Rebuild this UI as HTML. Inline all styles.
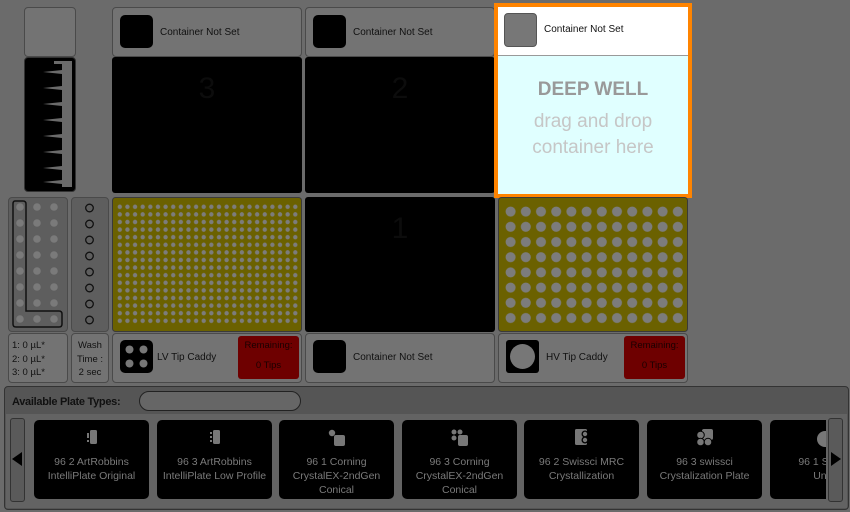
<!DOCTYPE html>
<html><head><meta charset="utf-8"><style>
*{box-sizing:border-box;margin:0;padding:0}
body{width:850px;height:512px;background:#6b6b6b;position:relative;overflow:hidden;font-family:"Liberation Sans",sans-serif}
.a{position:absolute}
.hdr{background:#737373;border:1px solid #4a4a4a;border-radius:4px}
.ico{position:absolute;width:33px;height:33px;background:#000;border-radius:5px}
.lbl{position:absolute;font-size:10px;color:#111}
.card{position:absolute;top:420px;width:115px;height:79px;background:#000;border-radius:5px;color:#7a7a7a;font-size:10.5px;text-align:center;line-height:14px;overflow:hidden}
.card div{position:absolute;top:35px;left:0;right:0}
.rem{position:absolute;background:#6e0000;border-radius:3px;color:#1a0000;font-size:9.5px;text-align:center;line-height:20px;width:61px;height:43px}
.num{position:absolute;text-align:center;font-size:30px;color:#0c0c0c}
</style></head><body>
<!-- top-left -->
<div class="a hdr" style="left:24px;top:7px;width:52px;height:50px"></div>
<div class="a" style="left:24px;top:57px;width:52px;height:135px;background:#000;border-radius:4px;border:1px solid #333"></div>
<svg class="a" style="left:24px;top:57px" width="52" height="135">
<rect x="38" y="4" width="10" height="126" fill="#6a6a6a"/>
<g fill="#6a6a6a">
<polygon points="19,15 38,13 38,17"/><polygon points="19,31 38,29 38,33"/><polygon points="19,47 38,45 38,49"/><polygon points="19,63 38,61 38,65"/><polygon points="19,79 38,77 38,81"/><polygon points="19,95 38,93 38,97"/><polygon points="19,111 38,109 38,113"/><polygon points="19,125 38,123 38,127"/>
<rect x="30" y="4" width="8" height="3"/>
</g></svg>
<!-- pos 3 -->
<div class="a hdr" style="left:112px;top:7px;width:190px;height:50px"></div>
<div class="ico" style="left:120px;top:15px"></div>
<div class="lbl" style="left:160px;top:27px">Container Not Set</div>
<div class="a" style="left:112px;top:57px;width:190px;height:136px;background:#000;border-radius:3px"></div>
<div class="num" style="left:112px;top:72px;width:190px">3</div>
<!-- pos 2 -->
<div class="a hdr" style="left:305px;top:7px;width:190px;height:50px"></div>
<div class="ico" style="left:313px;top:15px"></div>
<div class="lbl" style="left:353px;top:27px">Container Not Set</div>
<div class="a" style="left:305px;top:57px;width:190px;height:136px;background:#000;border-radius:3px"></div>
<div class="num" style="left:305px;top:72px;width:190px">2</div>
<!-- highlight -->
<div class="a" style="left:494px;top:3px;width:198px;height:195px;border:4px solid #ff8400;background:#e0ffff"></div>
<div class="a" style="left:498px;top:7px;width:190px;height:49px;background:#fff;border-bottom:1px solid #999"></div>
<div class="a" style="left:504px;top:13px;width:33px;height:34px;background:#777;border:1px solid #555;border-radius:4px"></div>
<div class="a" style="left:544px;top:24px;font-size:10px;color:#111">Container Not Set</div>
<div class="a" style="left:498px;top:79px;width:190px;text-align:center;font-size:19px;font-weight:bold;color:#999">DEEP WELL</div>
<div class="a" style="left:498px;top:109px;width:190px;text-align:center;font-size:19px;color:#c6c6c6;line-height:26px">drag and drop<br>container here</div>
<!-- row 2 -->
<div class="a" style="left:8px;top:197px;width:60px;height:135px;background:#5e5e5e;border:1px solid #4a4a4a;border-radius:4px"></div>
<svg class="a" style="left:8px;top:197px" width="60" height="135">
<g fill="#7a7a7a">
<circle cx="12" cy="10" r="3.8"/><circle cx="29" cy="10" r="3.8"/><circle cx="46" cy="10" r="3.8"/>
<circle cx="12" cy="26" r="3.8"/><circle cx="29" cy="26" r="3.8"/><circle cx="46" cy="26" r="3.8"/>
<circle cx="12" cy="42" r="3.8"/><circle cx="29" cy="42" r="3.8"/><circle cx="46" cy="42" r="3.8"/>
<circle cx="12" cy="58" r="3.8"/><circle cx="29" cy="58" r="3.8"/><circle cx="46" cy="58" r="3.8"/>
<circle cx="12" cy="74" r="3.8"/><circle cx="29" cy="74" r="3.8"/><circle cx="46" cy="74" r="3.8"/>
<circle cx="12" cy="90" r="3.8"/><circle cx="29" cy="90" r="3.8"/><circle cx="46" cy="90" r="3.8"/>
<circle cx="12" cy="106" r="3.8"/><circle cx="29" cy="106" r="3.8"/><circle cx="46" cy="106" r="3.8"/>
<circle cx="12" cy="122" r="3.8"/><circle cx="29" cy="122" r="3.8"/><circle cx="46" cy="122" r="3.8"/>
</g>
<path d="M7,4 H15 Q18,4 18,7 V114 H51 Q54,114 54,117 V127 Q54,130 51,130 H8 Q5,130 5,127 V7 Q5,4 7,4Z" fill="none" stroke="#111" stroke-width="1.5"/>
</svg>
<div class="a" style="left:71px;top:197px;width:38px;height:135px;background:#5e5e5e;border:1px solid #4a4a4a;border-radius:4px"></div>
<svg class="a" style="left:71px;top:197px" width="38" height="135"><g fill="none" stroke="#111" stroke-width="1.3">
<circle cx="18.5" cy="11" r="3.8"/><circle cx="18.5" cy="27" r="3.8"/><circle cx="18.5" cy="43" r="3.8"/><circle cx="18.5" cy="59" r="3.8"/><circle cx="18.5" cy="75" r="3.8"/><circle cx="18.5" cy="91" r="3.8"/><circle cx="18.5" cy="107" r="3.8"/><circle cx="18.5" cy="123" r="3.8"/></g></svg>
<svg class="a" style="left:112px;top:197px" width="190" height="135">
<defs><pattern id="lv" x="4" y="6" width="7.63" height="7.6" patternUnits="userSpaceOnUse"><circle cx="3.8" cy="3.8" r="2.2" fill="#7c7c7c"/></pattern>
<pattern id="hv" x="5" y="7" width="15.2" height="15.2" patternUnits="userSpaceOnUse"><circle cx="7.6" cy="7.6" r="5" fill="#7c7c7c"/></pattern></defs>
<rect x="0.5" y="0.5" width="189" height="134" rx="3" fill="#6b6100" stroke="#3a3a3a"/>
<rect x="4" y="6" width="183" height="122" fill="url(#lv)"/>
</svg>
<div class="a" style="left:305px;top:197px;width:190px;height:135px;background:#000;border-radius:3px"></div>
<div class="num" style="left:305px;top:212px;width:190px">1</div>
<svg class="a" style="left:498px;top:197px" width="190" height="135">
<rect x="0.5" y="0.5" width="189" height="134" rx="3" fill="#6b6100" stroke="#3a3a3a"/>
<rect x="5" y="7" width="183" height="122" fill="url(#hv)"/>
</svg>
<!-- bottom labels -->
<div class="a hdr" style="left:8px;top:333px;width:60px;height:50px;font-size:9.5px;color:#111;padding:5px 0 0 3px;line-height:13.5px">1: 0 µL*<br>2: 0 µL*<br>3: 0 µL*</div>
<div class="a hdr" style="left:71px;top:333px;width:38px;height:50px;font-size:9.5px;color:#111;text-align:center;padding-top:5px;line-height:13.5px">Wash<br>Time :<br>2 sec</div>
<div class="a hdr" style="left:112px;top:333px;width:190px;height:50px"></div>
<svg class="a" style="left:120px;top:340px" width="33" height="33"><rect width="33" height="33" rx="5" fill="#000"/><g fill="#777"><circle cx="9.5" cy="9.5" r="4"/><circle cx="23.5" cy="9.5" r="4"/><circle cx="9.5" cy="23.5" r="4"/><circle cx="23.5" cy="23.5" r="4"/></g></svg>
<div class="lbl" style="left:157px;top:352px">LV Tip Caddy</div>
<div class="rem" style="left:238px;top:336px">Remaining:<br>0 Tips</div>
<div class="a hdr" style="left:305px;top:333px;width:190px;height:50px"></div>
<div class="ico" style="left:313px;top:340px"></div>
<div class="lbl" style="left:353px;top:352px">Container Not Set</div>
<div class="a hdr" style="left:498px;top:333px;width:190px;height:50px"></div>
<svg class="a" style="left:506px;top:340px" width="33" height="33"><rect width="33" height="33" rx="3" fill="#000"/><circle cx="16.5" cy="16.5" r="12.5" fill="#777"/></svg>
<div class="lbl" style="left:546px;top:352px">HV Tip Caddy</div>
<div class="rem" style="left:624px;top:336px">Remaining:<br>0 Tips</div>
<!-- bottom panel -->
<div class="a" style="left:4px;top:386px;width:845px;height:124px;background:#555;border:1px solid #333;border-radius:4px"></div>
<div class="a" style="left:6px;top:414px;width:841px;height:94px;background:#636363"></div>
<div class="a" style="left:12px;top:396px;font-size:11px;font-weight:bold;color:#111;letter-spacing:-0.3px">Available Plate Types:</div>
<div class="a" style="left:139px;top:391px;width:162px;height:20px;background:#666;border:1px solid #222;border-radius:10px"></div>
<div class="a" style="left:10px;top:418px;width:15px;height:84px;background:#5a5a5a;border:1px solid #333;border-radius:3px"></div>
<div class="a" style="left:12px;top:452px;width:0;height:0;border-top:7px solid transparent;border-bottom:7px solid transparent;border-right:10px solid #000"></div>
<div class="card" style="left:34px"><svg style="position:absolute;left:51px;top:10px" width="14" height="16"><rect x="5" y="0" width="7" height="14" rx="1.5" fill="#777"/><rect x="2" y="3" width="2" height="5" fill="#777"/><rect x="2" y="10" width="2" height="2" fill="#777"/></svg><div>96 2 ArtRobbins<br>IntelliPlate Original</div></div>
<div class="card" style="left:157px"><svg style="position:absolute;left:51px;top:10px" width="14" height="16"><rect x="5" y="0" width="7" height="14" rx="1.5" fill="#777"/><rect x="2" y="2" width="2" height="2" fill="#777"/><rect x="2" y="6" width="2" height="2" fill="#777"/><rect x="2" y="10" width="2" height="2" fill="#777"/></svg><div>96 3 ArtRobbins<br>IntelliPlate Low Profile</div></div>
<div class="card" style="left:279px"><svg style="position:absolute;left:49px;top:9px" width="18" height="18"><circle cx="4" cy="4" r="3.2" fill="#777"/><rect x="6" y="6" width="11" height="11" rx="2" fill="#777"/></svg><div>96 1 Corning<br>CrystalEX-2ndGen<br>Conical</div></div>
<div class="card" style="left:402px"><svg style="position:absolute;left:49px;top:9px" width="18" height="18"><circle cx="3" cy="3" r="2.5" fill="#777"/><circle cx="9" cy="3" r="2.5" fill="#777"/><circle cx="3" cy="9" r="2.5" fill="#777"/><rect x="7" y="6" width="10" height="11" rx="2" fill="#777"/></svg><div>96 3 Corning<br>CrystalEX-2ndGen<br>Conical</div></div>
<div class="card" style="left:524px"><svg style="position:absolute;left:51px;top:9px" width="16" height="18"><rect x="0" y="0" width="12" height="16" rx="1.5" fill="#777"/><circle cx="10" cy="5" r="3.5" fill="#000"/><circle cx="10" cy="11" r="3.5" fill="#000"/><circle cx="10" cy="5" r="2.2" fill="#777"/><circle cx="10" cy="11" r="2.2" fill="#777"/></svg><div>96 2 Swissci MRC<br>Crystallization</div></div>
<div class="card" style="left:647px"><svg style="position:absolute;left:49px;top:9px" width="18" height="18"><rect x="6" y="0" width="11" height="11" rx="2" fill="#777"/><circle cx="4.5" cy="6" r="3.8" fill="#777" stroke="#000"/><circle cx="4.5" cy="13" r="3.8" fill="#777" stroke="#000"/><circle cx="12" cy="13" r="3.8" fill="#777" stroke="#000"/></svg><div>96 3 swissci<br>Crystalization Plate</div></div>
<div class="card" style="left:770px;width:56px;border-radius:5px 0 0 5px"><svg style="position:absolute;left:45px;top:10px" width="12" height="18"><circle cx="10" cy="9" r="8" fill="#777"/></svg><div style="left:0;right:auto;width:115px">96 1 Swissci<br>Under</div></div>
<div class="a" style="left:828px;top:418px;width:15px;height:84px;background:#5a5a5a;border:1px solid #333;border-radius:3px"></div>
<div class="a" style="left:831px;top:452px;width:0;height:0;border-top:7px solid transparent;border-bottom:7px solid transparent;border-left:10px solid #000"></div>
</body></html>
